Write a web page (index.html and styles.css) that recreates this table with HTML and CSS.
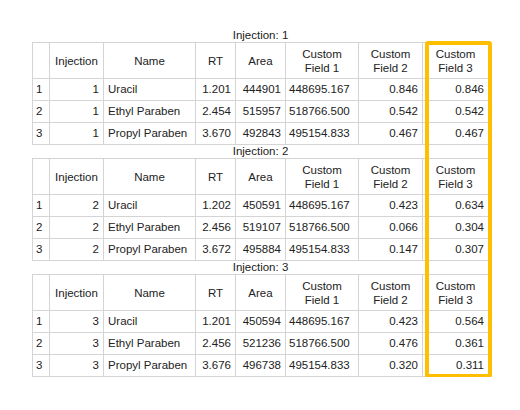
FILE: index.html
```html
<!DOCTYPE html>
<html>
<head>
<meta charset="utf-8">
<link rel="stylesheet" href="styles.css">
</head>
<body>
<div class="report">
  <section class="inj">
    <div class="title">Injection: 1</div>
    <div class="grid">
      <div class="h"></div><div class="h">Injection</div><div class="h">Name</div><div class="h">RT</div><div class="h">Area</div><div class="h">Custom<br>Field 1</div><div class="h">Custom<br>Field 2</div><div class="h last">Custom<br>Field 3</div>
      <div class="c l">1</div><div class="c r">1</div><div class="c l n">Uracil</div><div class="c r">1.201</div><div class="c r">444901</div><div class="c l">448695.167</div><div class="c r">0.846</div><div class="c r">0.846</div>
      <div class="c l">2</div><div class="c r">1</div><div class="c l n">Ethyl Paraben</div><div class="c r">2.454</div><div class="c r">515957</div><div class="c l">518766.500</div><div class="c r">0.542</div><div class="c r">0.542</div>
      <div class="c l">3</div><div class="c r">1</div><div class="c l n">Propyl Paraben</div><div class="c r">3.670</div><div class="c r">492843</div><div class="c l">495154.833</div><div class="c r">0.467</div><div class="c r">0.467</div>
    </div>
  </section>
  <section class="inj">
    <div class="title">Injection: 2</div>
    <div class="grid">
      <div class="h"></div><div class="h">Injection</div><div class="h">Name</div><div class="h">RT</div><div class="h">Area</div><div class="h">Custom<br>Field 1</div><div class="h">Custom<br>Field 2</div><div class="h last">Custom<br>Field 3</div>
      <div class="c l">1</div><div class="c r">2</div><div class="c l n">Uracil</div><div class="c r">1.202</div><div class="c r">450591</div><div class="c l">448695.167</div><div class="c r">0.423</div><div class="c r">0.634</div>
      <div class="c l">2</div><div class="c r">2</div><div class="c l n">Ethyl Paraben</div><div class="c r">2.456</div><div class="c r">519107</div><div class="c l">518766.500</div><div class="c r">0.066</div><div class="c r">0.304</div>
      <div class="c l">3</div><div class="c r">2</div><div class="c l n">Propyl Paraben</div><div class="c r">3.672</div><div class="c r">495884</div><div class="c l">495154.833</div><div class="c r">0.147</div><div class="c r">0.307</div>
    </div>
  </section>
  <section class="inj">
    <div class="title">Injection: 3</div>
    <div class="grid">
      <div class="h"></div><div class="h">Injection</div><div class="h">Name</div><div class="h">RT</div><div class="h">Area</div><div class="h">Custom<br>Field 1</div><div class="h">Custom<br>Field 2</div><div class="h last">Custom<br>Field 3</div>
      <div class="c l">1</div><div class="c r">3</div><div class="c l n">Uracil</div><div class="c r">1.201</div><div class="c r">450594</div><div class="c l">448695.167</div><div class="c r">0.423</div><div class="c r">0.564</div>
      <div class="c l">2</div><div class="c r">3</div><div class="c l n">Ethyl Paraben</div><div class="c r">2.456</div><div class="c r">521236</div><div class="c l">518766.500</div><div class="c r">0.476</div><div class="c r">0.361</div>
      <div class="c l">3</div><div class="c r">3</div><div class="c l n">Propyl Paraben</div><div class="c r">3.676</div><div class="c r">496738</div><div class="c l">495154.833</div><div class="c r">0.320</div><div class="c r">0.311</div>
    </div>
  </section>
  <div class="highlight"></div>
</div>
</body>
</html>
```
FILE: styles.css
```css
html, body {
  margin: 0;
  padding: 0;
  background: #ffffff;
}
body {
  font-family: "Liberation Sans", Arial, sans-serif;
  font-size: 11.5px;
  color: #222;
}
.report {
  position: relative;
  width: 457px;
  margin: 29px 0 0 32px;
}
.title {
  height: 13px;
  line-height: 13px;
  text-align: center;
  white-space: nowrap;
}
.grid {
  display: grid;
  grid-template-columns: 17px 54px 92px 40px 50px 73px 64px 66px;
  border-top: 1px solid #d4d4d4;
  border-left: 1px solid #d4d4d4;
}
.grid > div {
  border-right: 1px solid #d4d4d4;
  border-bottom: 1px solid #d4d4d4;
  white-space: nowrap;
  overflow: hidden;
}
.h {
  height: 35px;
  display: flex;
  align-items: center;
  justify-content: center;
  text-align: center;
  line-height: 14px;
}
.c {
  height: 21px;
  line-height: 21px;
}
.c.l { text-align: left; padding-left: 3px; }
.c.n { padding-left: 4px; }
.c.r { text-align: right; padding-right: 4px; }
.highlight {
  position: absolute;
  left: 393px;
  top: 12px;
  width: 67px;
  height: 337px;
  box-sizing: border-box;
  border: 4px solid #ffbf00;
  border-radius: 3px;
}
```
